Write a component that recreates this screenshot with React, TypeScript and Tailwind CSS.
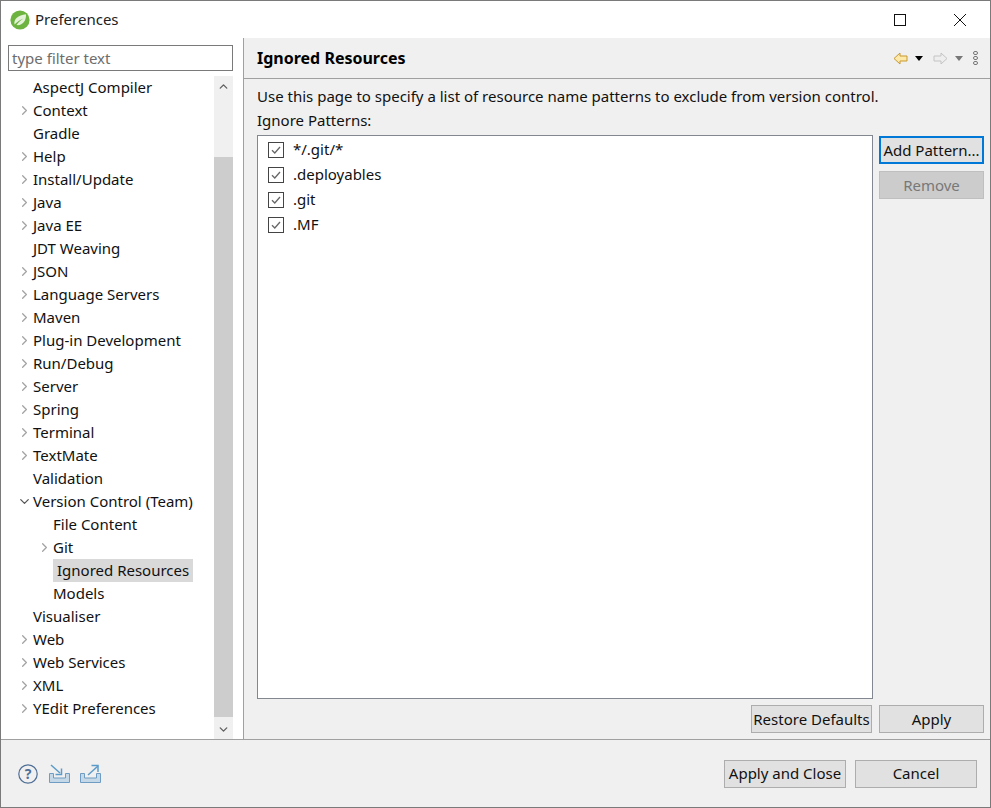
import { ChevronDown, ChevronRight, ChevronUp } from "lucide-react";

interface TreeItem {
  label: string;
  arrow?: "closed" | "open";
  indent?: boolean;
  selected?: boolean;
}

const treeItems: TreeItem[] = [
  { label: "AspectJ Compiler" },
  { label: "Context", arrow: "closed" },
  { label: "Gradle" },
  { label: "Help", arrow: "closed" },
  { label: "Install/Update", arrow: "closed" },
  { label: "Java", arrow: "closed" },
  { label: "Java EE", arrow: "closed" },
  { label: "JDT Weaving" },
  { label: "JSON", arrow: "closed" },
  { label: "Language Servers", arrow: "closed" },
  { label: "Maven", arrow: "closed" },
  { label: "Plug-in Development", arrow: "closed" },
  { label: "Run/Debug", arrow: "closed" },
  { label: "Server", arrow: "closed" },
  { label: "Spring", arrow: "closed" },
  { label: "Terminal", arrow: "closed" },
  { label: "TextMate", arrow: "closed" },
  { label: "Validation" },
  { label: "Version Control (Team)", arrow: "open" },
  { label: "File Content", indent: true },
  { label: "Git", arrow: "closed", indent: true },
  { label: "Ignored Resources", indent: true, selected: true },
  { label: "Models", indent: true },
  { label: "Visualiser" },
  { label: "Web", arrow: "closed" },
  { label: "Web Services", arrow: "closed" },
  { label: "XML", arrow: "closed" },
  { label: "YEdit Preferences", arrow: "closed" },
];

const patterns = ["*/.git/*", ".deployables", ".git", ".MF"];

function SpringLogo() {
  return (
    <svg width="20" height="20" viewBox="0 0 20 20">
      <circle cx="10" cy="10" r="9.6" fill="#6db33f" />
      <path d="M4.5 14.5C3.5 9 8 5 16 4.2 16.5 11 12 16 6.5 15c2-3 4.500-5 7-6.500-3 1-6 3-9 6z" fill="#e4f2d8" />
    </svg>
  );
}

function Checkbox() {
  return (
    <span className="flex h-4 w-4 items-center justify-center border border-[#444] bg-white">
      <svg width="12" height="12" viewBox="0 0 12 12" fill="none">
        <path d="M2 6.200 4.800 9 10 3" stroke="#666" strokeWidth="1.300" />
      </svg>
    </span>
  );
}

function PushButton({ label, className }: { label: string; className: string }) {
  return (
    <button className={`flex h-[28px] items-center justify-center border border-[#adadad] bg-[#e1e1e1] text-[15px] text-[#111] ${className}`}>
      {label}
    </button>
  );
}

function ImportIcon() {
  return (
    <svg width="23" height="20" viewBox="0 0 23 20" fill="none">
      <path d="M1.500 9.500v9h20v-9h-4v4.500h-12v-4.500z" fill="#c5d8e8" stroke="#6f9cc2" />
      <path d="M3 1l9 8" stroke="#5b9bc9" strokeWidth="1.500" />
      <path d="M13.500 4.500v6h-6" stroke="#5b9bc9" strokeWidth="1.500" />
    </svg>
  );
}

function ExportIcon() {
  return (
    <svg width="23" height="20" viewBox="0 0 23 20" fill="none">
      <path d="M1.500 9.500v9h20v-9h-4v4.500h-12v-4.500z" fill="#c5d8e8" stroke="#6f9cc2" />
      <path d="M9 11l10-9" stroke="#5b9bc9" strokeWidth="1.500" />
      <path d="M12.500 1.500h6.500v6.500" stroke="#5b9bc9" strokeWidth="1.500" />
    </svg>
  );
}

export default function App() {
  return (
    <div className="flex h-[808px] w-[991px] flex-col border border-[#7a7a7a] bg-white text-[15px] leading-[23px] text-[#111] [font-family:'Noto_Sans','Open_Sans',sans-serif]">
      {/* Title bar */}
      <div className="flex h-[37px] shrink-0 items-center pl-[9px]">
        <SpringLogo />
        <span className="ml-[5px] text-[15px] text-[#222]">Preferences</span>
        <div className="ml-auto flex items-center">
          <svg width="12" height="12" viewBox="0 0 12 12" fill="none" className="mr-[47px]">
            <rect x="0.500" y="0.500" width="11" height="11" stroke="#111" />
          </svg>
          <svg width="14" height="14" viewBox="0 0 14 14" fill="none" className="mr-[23px]">
            <path d="M1 1l12 12M13 1L1 13" stroke="#111" />
          </svg>
        </div>
      </div>

      <div className="flex min-h-0 flex-1">
        {/* Left tree panel */}
        <div className="flex w-[242px] shrink-0 flex-col pl-[7px] pr-[10px] pt-[7px]">
          <input
            readOnly
            placeholder="type filter text"
            className="h-[26px] w-full shrink-0 border border-[#7a7a7a] px-[3px] text-[15px] outline-none placeholder:text-[#6d6d6d]"
          />
          <div className="mt-[5px] flex min-h-0 flex-1">
            <div className="flex-1">
              {treeItems.map((item) => (
                <div key={item.label} className={`flex h-[23px] items-center ${item.indent ? "pl-[28px]" : "pl-[8px]"}`}>
                  <span className="flex w-[16px] shrink-0 justify-center">
                    {item.arrow === "closed" && <ChevronRight size={15} strokeWidth={2} className="text-[#a3a3a3]" />}
                    {item.arrow === "open" && <ChevronDown size={15} strokeWidth={2} className="text-[#555]" />}
                  </span>
                  <span className={`ml-[1px] whitespace-nowrap ${item.selected ? "-ml-[3px] bg-[#d9d9d9] px-[4px]" : ""}`}>
                    {item.label}
                  </span>
                </div>
              ))}
            </div>
            <div className="flex w-[19px] shrink-0 flex-col bg-[#f0f0f0]">
              <div className="flex h-[20px] items-center justify-center">
                <ChevronUp size={13} strokeWidth={2.500} className="text-[#606060]" />
              </div>
              <div className="mt-[61px] h-[560px] bg-[#cdcdcd]" />
              <div className="mt-auto flex h-[20px] items-center justify-center">
                <ChevronDown size={13} strokeWidth={2.500} className="text-[#606060]" />
              </div>
            </div>
          </div>
        </div>

        {/* Right page */}
        <div className="flex min-w-0 flex-1 flex-col border-l border-[#a0a0a0] bg-[#f0f0f0]">
          <div className="flex h-[41px] shrink-0 items-center border-b border-[#a0a0a0] pl-[13px] pr-[12px]">
            <span className="text-[16px] font-bold text-black">Ignored Resources</span>
            <div className="ml-auto flex items-center">
              <svg width="15" height="13" viewBox="0 0 15 13" fill="none">
                <path d="M7 1L1 6.500 7 12V9h7V4H7z" fill="#fde9a9" stroke="#c9992f" />
              </svg>
              <span className="ml-[7px] h-0 w-0 border-x-[4px] border-t-[5px] border-x-transparent border-t-black" />
              <svg width="15" height="13" viewBox="0 0 15 13" fill="none" className="ml-[10px]">
                <path d="M8 1l6 5.500L8 12V9H1V4h7z" fill="#eee" stroke="#c4c4c4" />
              </svg>
              <span className="ml-[7px] h-0 w-0 border-x-[4px] border-t-[5px] border-x-transparent border-t-[#777]" />
              <span className="ml-[10px] flex flex-col gap-[1px]">
                <span className="h-[4px] w-[5px] rounded-full border border-[#777]" />
                <span className="h-[4px] w-[5px] rounded-full border border-[#777]" />
                <span className="h-[4px] w-[5px] rounded-full border border-[#777]" />
              </span>
            </div>
          </div>

          <div className="flex min-h-0 flex-1 flex-col pl-[13px] pr-[6px]">
            <div className="mt-[6px]">Use this page to specify a list of resource name patterns to exclude from version control.</div>
            <div className="mt-[1px]">Ignore Patterns:</div>
            <div className="mt-[3px] flex min-h-0 flex-1 gap-[6px]">
              <div className="w-[616px] border border-[#828790] bg-white pl-[10px] pt-[1px]">
                {patterns.map((pattern) => (
                  <div key={pattern} className="flex h-[25px] items-center gap-[9px]">
                    <Checkbox />
                    <span>{pattern}</span>
                  </div>
                ))}
              </div>
              <div className="flex flex-col gap-[7px] pt-[1px]">
                <button className="flex h-[28px] w-[105px] items-center justify-center border-2 border-[#0078d7] bg-[#e1e1e1] text-[15px]">
                  Add Pattern...
                </button>
                <button className="flex h-[28px] w-[105px] items-center justify-center border border-[#bfbfbf] bg-[#cccccc] text-[15px] text-[#787878]">
                  Remove
                </button>
              </div>
            </div>
            <div className="flex h-[40px] shrink-0 items-center justify-end gap-[7px]">
              <PushButton label="Restore Defaults" className="w-[121px]" />
              <PushButton label="Apply" className="w-[105px]" />
            </div>
          </div>
        </div>
      </div>

      {/* Footer */}
      <div className="flex h-[68px] shrink-0 items-center border-t border-[#a0a0a0] bg-[#f0f0f0] pl-[17px] pr-[13px]">
        <svg width="20" height="20" viewBox="0 0 20 20" fill="none">
          <circle cx="10" cy="10" r="9.200" stroke="#4f6f96" strokeWidth="1.200" />
          <text x="10" y="15" textAnchor="middle" fontSize="14" fontWeight="700" fill="#4f6f96">?</text>
        </svg>
        <span className="ml-[10px] flex"><ImportIcon /></span>
        <span className="ml-[8px] flex"><ExportIcon /></span>
        <div className="ml-auto flex gap-[9px]">
          <PushButton label="Apply and Close" className="w-[122px]" />
          <PushButton label="Cancel" className="w-[122px]" />
        </div>
      </div>
    </div>
  );
}
